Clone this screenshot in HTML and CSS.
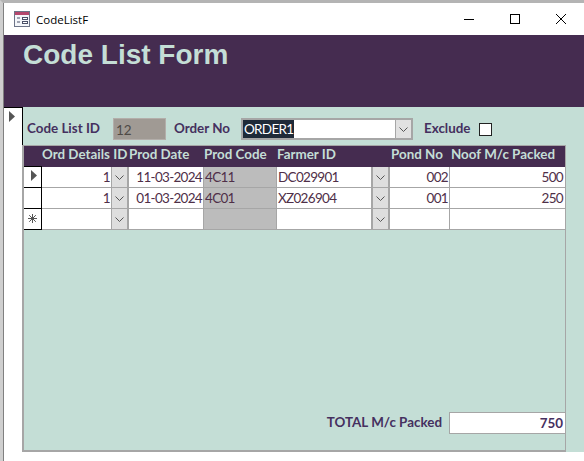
FILE: index.html
```html
<!doctype html>
<html lang="en">

<head>
    <meta charset="UTF-8" />
    <title>CodeListF</title>
    <link rel="stylesheet" href="styles.css">
</head>

<body>
    <div class="window">
        <div class="titlebar">
            <svg class="app-icon" width="16" height="16" viewBox="0 0 16 16">
                <rect x="0.5" y="0.5" width="15" height="15" fill="#f4f6fa" stroke="#6d7488"></rect>
                <rect x="1" y="1" width="14" height="3" fill="#b5476d"></rect>
                <path d="M3 7h3M3 11h3" stroke="#4a5068" fill="none"></path>
                <rect x="8.5" y="6.5" width="5" height="2" fill="#fff" stroke="#4a5068"></rect>
                <rect x="8.5" y="10.5" width="5" height="2" fill="#fff" stroke="#4a5068"></rect>
            </svg>
            <span class="window-title">CodeListF</span>
            <div class="window-controls">
                <svg width="12" height="12" viewBox="0 0 12 12">
                    <path d="M1 6.500h10" stroke="#000" fill="none"></path>
                </svg>
                <svg width="12" height="12" viewBox="0 0 12 12">
                    <rect x="1.500" y="1.500" width="9" height="9" stroke="#000" fill="none"></rect>
                </svg>
                <svg width="12" height="12" viewBox="0 0 12 12">
                    <path d="M1 1l10 10M11 1L1 11" stroke="#000" fill="none"></path>
                </svg>
            </div>
        </div>

        <div class="form-header">
            <h1>Code List Form</h1>
        </div>

        <div class="form-detail">
            <div class="record-selector">
                <svg class="arrow" width="6" height="11" viewBox="0 0 6 11">
                    <path d="M0 0l6 5.500-6 5.500z" fill="#555"></path>
                </svg>
            </div>

            <div class="form-body">
                <div class="fields">
                    <label class="label label-id">Code List ID</label>
                    <div class="input-id">12</div>
                    <label class="label label-order">Order No</label>
                    <div class="combo combo-order">
                        <div class="combo-text"><span class="selected">ORDER1</span></div>
                        <div class="combo-btn">
                            <svg width="9" height="5" viewBox="0 0 9 5">
                                <path d="M0.500 0.500l4 4 4-4" stroke="#555" fill="none"></path>
                            </svg>
                        </div>
                    </div>
                    <label class="label label-exclude">Exclude</label>
                    <div class="checkbox"></div>
                </div>

                <div class="subform">
                    <div class="datasheet">
                        <div class="grid-row grid-head">
                            <div class="head-cell head-id">Ord Details ID</div>
                            <div class="head-cell head-date">Prod Date</div>
                            <div class="head-cell head-code">Prod Code</div>
                            <div class="head-cell head-farmer">Farmer ID</div>
                            <div class="head-cell head-pond">Pond No</div>
                            <div class="head-cell head-packed">Noof M/c Packed</div>
                        </div>

                        <div class="grid-row data-row">
                            <div class="row-selector">
                                <svg width="6" height="11" viewBox="0 0 6 11">
                                    <path d="M0 0l6 5.500-6 5.500z" fill="#555"></path>
                                </svg>
                            </div>
                            <div class="cell num">1</div>
                            <div class="cell-btn">
                                <svg width="9" height="5" viewBox="0 0 9 5">
                                    <path d="M0.500 0.500l4 4 4-4" stroke="#555" fill="none"></path>
                                </svg>
                            </div>
                            <div class="cell num">11-03-2024</div>
                            <div class="cell locked">4C11</div>
                            <div class="cell">DC029901</div>
                            <div class="cell-btn">
                                <svg width="9" height="5" viewBox="0 0 9 5">
                                    <path d="M0.500 0.500l4 4 4-4" stroke="#555" fill="none"></path>
                                </svg>
                            </div>
                            <div class="cell num">002</div>
                            <div class="cell num last">500</div>
                        </div>

                        <div class="grid-row data-row">
                            <div class="row-selector"></div>
                            <div class="cell num">1</div>
                            <div class="cell-btn">
                                <svg width="9" height="5" viewBox="0 0 9 5">
                                    <path d="M0.500 0.500l4 4 4-4" stroke="#555" fill="none"></path>
                                </svg>
                            </div>
                            <div class="cell num">01-03-2024</div>
                            <div class="cell locked">4C01</div>
                            <div class="cell">XZ026904</div>
                            <div class="cell-btn">
                                <svg width="9" height="5" viewBox="0 0 9 5">
                                    <path d="M0.500 0.500l4 4 4-4" stroke="#555" fill="none"></path>
                                </svg>
                            </div>
                            <div class="cell num">001</div>
                            <div class="cell num last">250</div>
                        </div>

                        <div class="grid-row data-row">
                            <div class="row-selector new-row">
                                <svg width="9" height="9" viewBox="0 0 9 9">
                                    <path d="M4.500 0v9M0 4.500h9M1.200 1.200l6.600 6.600M7.800 1.200L1.200 7.800" stroke="#555" fill="none"></path>
                                </svg>
                            </div>
                            <div class="cell num"></div>
                            <div class="cell-btn">
                                <svg width="9" height="5" viewBox="0 0 9 5">
                                    <path d="M0.500 0.500l4 4 4-4" stroke="#555" fill="none"></path>
                                </svg>
                            </div>
                            <div class="cell num"></div>
                            <div class="cell locked"></div>
                            <div class="cell"></div>
                            <div class="cell-btn">
                                <svg width="9" height="5" viewBox="0 0 9 5">
                                    <path d="M0.500 0.500l4 4 4-4" stroke="#555" fill="none"></path>
                                </svg>
                            </div>
                            <div class="cell num"></div>
                            <div class="cell num last"></div>
                        </div>
                    </div>

                    <div class="totals">
                        <label class="label">TOTAL M/c Packed</label>
                        <div class="total-box">750</div>
                    </div>
                </div>
            </div>
        </div>
    </div>
</body>

</html>
```

FILE: styles.css
```css
:root {
    --purple: #452c50;
    --mint: #c4ded6;
    --line: #a6a6a6;
    --label: #45305f;
    --cell-text: #4f2f48;
}

* {
    box-sizing: border-box;
    margin: 0;
    padding: 0;
}

body {
    background-color: #fff;
    font-family: Lato, "Noto Sans", sans-serif;
    width: 584px;
    height: 461px;
    overflow: hidden;
    border-top: 3px solid #b4b4b4;
    border-left: 3px solid #cfcfcf;
}

.window {
    height: 458px;
    border-left: 1px solid #808080;
}

.titlebar {
    display: flex;
    align-items: center;
    height: 32px;
    padding-left: 10px;
    background-color: #fff;
}

.window-title {
    font-family: "Open Sans", sans-serif;
    font-size: 11.5px;
    margin-left: 6px;
    color: #000;
}

.window-controls {
    display: flex;
    gap: 34px;
    margin-left: auto;
    margin-right: 17px;
}

.form-header {
    background-color: var(--purple);
    height: 72px;
    padding: 4px 0 0 19px;
}

h1 {
    font-family: "Liberation Sans", Arial, sans-serif;
    font-size: 28px;
    font-weight: 700;
    line-height: 32px;
    color: #c4ded6;
}

.form-detail {
    display: flex;
    height: 345px;
}

.record-selector {
    width: 19px;
    border-top: 1px solid #000;
    border-right: 1px solid #000;
    background-color: #fff;
    padding: 3px 0 0 5px;
    flex-shrink: 0;
}

.arrow {
    display: block;
}

.form-body {
    flex: 1;
    background-color: var(--mint);
    display: flex;
    flex-direction: column;
}

.fields {
    display: flex;
    align-items: center;
    height: 38px;
    padding: 6px 0 0 4px;
}

.label {
    font-size: 13.4px;
    font-weight: 700;
    color: var(--label);
    white-space: nowrap;
}

.fields .label {
    margin-bottom: 3px;
}

.label-id {
    width: 86px;
}

.input-id {
    width: 53px;
    height: 22px;
    background-color: #a09a94;
    border: 1px solid #b3aeaa;
    color: #4f4a46;
    font-size: 13.5px;
    line-height: 22px;
    padding-left: 2px;
}

.label-order {
    width: 67px;
    margin-left: 8px;
}

.combo {
    display: flex;
    width: 172px;
    height: 22px;
    border: 2px solid var(--line);
    background-color: #fff;
}

.combo-text {
    flex: 1;
    font-size: 13.5px;
    letter-spacing: -0.7px;
    line-height: 18px;
}

.selected {
    display: inline-block;
    background-color: #1f2a38;
    color: #fff;
    padding: 0 1px;
}

.combo-btn {
    width: 16px;
    border-left: 1px solid var(--line);
    background-color: #e1e1e1;
    display: flex;
    align-items: center;
    justify-content: center;
}

.label-exclude {
    margin-left: 11px;
    width: 55px;
}

.checkbox {
    width: 13px;
    height: 13px;
    border: 1px solid #222;
    background-color: #fff;
}

.subform {
    width: 544px;
    height: 307px;
    margin-left: -1px;
    border-right: 1px solid var(--line);
    border-bottom: 2px solid var(--line);
    border-left: 2px solid var(--line);
    display: flex;
    flex-direction: column;
    justify-content: space-between;
}

.grid-row {
    display: grid;
    grid-template-columns: 18px 69px 18px 75px 73px 95px 18px 60px 115px;
}

.grid-head {
    background-color: var(--purple);
    height: 22px;
    color: #c4ded6;
    font-size: 13.4px;
    font-weight: 700;
    line-height: 17px;
    border-top: 1px solid var(--line);
}

.head-cell {
    white-space: nowrap;
}

.head-id {
    grid-column: 2 / span 2;
}

.head-date {
    grid-column: 4;
}

.head-code {
    grid-column: 5;
}

.head-farmer {
    grid-column: 6 / span 2;
}

.head-pond {
    grid-column: 8;
    padding-left: 1px;
}

.head-packed {
    grid-column: 9;
    padding-left: 1px;
}

.data-row {
    height: 21px;
    grid-template-rows: 20px;
    background-color: #fff;
    font-size: 13.5px;
    letter-spacing: -0.7px;
    line-height: 20px;
    color: var(--cell-text);
    border-bottom: 1px solid var(--line);
}

.row-selector {
    border-right: 1px solid #000;
    border-bottom: 1px solid #000;
    box-shadow: 0 -1px 0 #000;
    height: 21px;
    padding: 3px 0 0 7px;
    background-color: #fff;
}

.row-selector svg {
    display: block;
}

.new-row {
    padding: 5px 0 0 4px;
}

.cell {
    border-right: 1px solid var(--line);
    padding: 0 1px;
    white-space: nowrap;
    overflow: hidden;
}

.row-selector + .cell {
    border-right: 0;
}

.num {
    text-align: right;
}

.last {
    border-right: 0;
    padding-right: 2px;
}

.locked {
    background-color: #bcbcbc;
}

.cell-btn {
    background-color: #dedede;
    border-left: 1px solid var(--line);
    border-right: 2px solid var(--line);
    display: flex;
    align-items: center;
    justify-content: center;
}

.totals {
    display: flex;
    justify-content: flex-end;
    align-items: center;
    gap: 7px;
    margin-right: -1px;
    margin-bottom: 16px;
}

.totals .label {
    margin-bottom: 3px;
}

.total-box {
    width: 117px;
    height: 22px;
    background-color: #fff;
    border: 1px solid var(--line);
    font-size: 13.4px;
    font-weight: 700;
    line-height: 20px;
    color: var(--label);
    text-align: right;
    padding-right: 2px;
}
```
